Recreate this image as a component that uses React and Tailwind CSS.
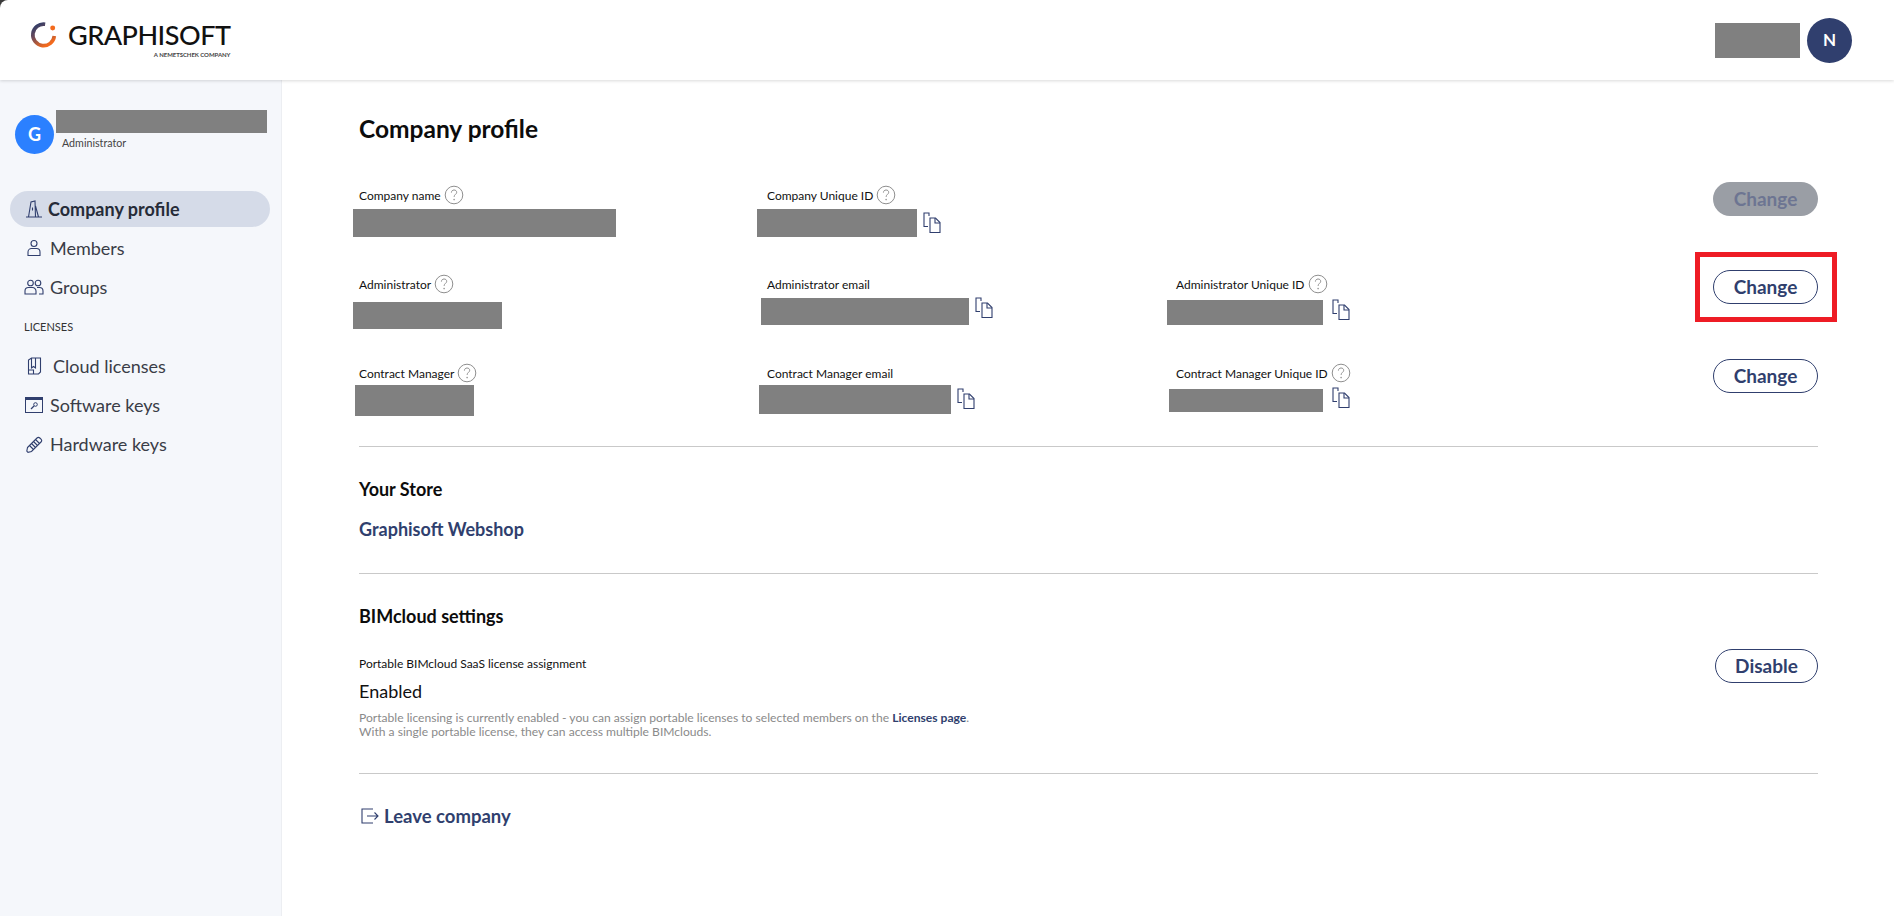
const NAVY = "#303f6e";

function HelpIcon() {
  return (
    <svg className="-mt-[3px] ml-[3px] h-[20px] w-[20px] shrink-0" viewBox="0 0 20 20" fill="none">
      <circle cx="10" cy="10" r="8.8" stroke="#8f8f8f" strokeWidth="1" />
      <path d="M7.4 7.6c0-1.6 1.2-2.6 2.7-2.6s2.6 1 2.6 2.3c0 2-2.6 2.2-2.6 4.6" stroke="#8f8f8f" strokeWidth="1" />
      <circle cx="10.1" cy="14.6" r=".8" fill="#8f8f8f" />
    </svg>
  );
}

function CopyIcon({ className = "" }) {
  return (
    <svg className={`h-[22px] w-[20px] shrink-0 ${className}`} viewBox="0 0 20 22" fill="none" stroke={NAVY} strokeWidth="1.1">
      <path d="M6 14.5H2V1h5v3" />
      <path d="M8 6h5.5L18 10.5V20.5H8z" />
      <path d="M13 6v5h5" />
    </svg>
  );
}

function Redacted({ className }) {
  return <div className={`bg-[#808080] ${className}`} />;
}

function Field({ label, help, redact, copy, copyClass }) {
  return (
    <div>
      <div className="flex h-[22px] items-center text-[12px] text-[#111]">
        {label}
        {help && <HelpIcon />}
      </div>
      <div className="flex items-start">
        <Redacted className={redact} />
        {copy && <CopyIcon className={copyClass} />}
      </div>
    </div>
  );
}

function ChangeButton({ disabled, children = "Change" }) {
  return (
    <button
      className={`h-[34px] w-[105px] rounded-full text-[19px] font-bold ${
        disabled
          ? "bg-[#9a9ea5] text-[#6d7592]"
          : "border border-[#303f6e] bg-white text-[#303f6e]"
      }`}
    >
      {children}
    </button>
  );
}

function SideItem({ icon, label, active, textClass = "" }) {
  return (
    <div
      className={`flex h-[36px] items-center rounded-full pl-[14px] text-[18px] ${
        active ? "bg-[#d5dbe8] font-bold text-[#262b38]" : "text-[#3a3d47]"
      }`}
    >
      <span className="flex w-[20px] shrink-0 justify-center">{icon}</span>
      <span className={textClass}>{label}</span>
    </div>
  );
}

const stroke = { fill: "none", stroke: NAVY, strokeWidth: 1.1 };

const BuildingIcon = (
  <svg width="18" height="18" viewBox="0 0 18 18" {...stroke}>
    <path d="M1 17h16M3.5 17 6 2l4-1 .5 16M10.5 6l3 11M7.5 7.5v3" />
  </svg>
);
const MemberIcon = (
  <svg width="16" height="18" viewBox="0 0 16 18" {...stroke}>
    <circle cx="8" cy="4.5" r="3" />
    <path d="M2 16.5V13a3.5 3.5 0 0 1 3.5-3.5h5A3.5 3.5 0 0 1 14 13v3.5z" />
  </svg>
);
const GroupIcon = (
  <svg width="20" height="16" viewBox="0 0 20 16" {...stroke} className="-ml-[1px]">
    <circle cx="6.5" cy="4" r="2.8" />
    <circle cx="14" cy="4" r="2.8" />
    <path d="M1 15v-3a3.5 3.5 0 0 1 3.5-3.5h4A3.5 3.5 0 0 1 12 12v3zM13 8.5h2.5A3.5 3.5 0 0 1 19 12v3h-4" />
  </svg>
);
const CloudIcon = (
  <svg width="15" height="18" viewBox="0 0 15 18" {...stroke}>
    <path d="M4.5 1h9v14l-2 2H1.500V3l3-2zM4.500 1v10l2-1.500 2 1.500V1" />
    <path d="M1.500 13h5v4" />
  </svg>
);
const SoftwareIcon = (
  <svg width="18" height="16" viewBox="0 0 18 16" fill="none">
    <rect x=".5" y=".5" width="17" height="15" stroke={NAVY} />
    <rect x=".5" y=".5" width="17" height="2.5" fill={NAVY} />
    <circle cx="10.5" cy="7.5" r="1.8" stroke={NAVY} />
    <path d="M9 9 6 12" stroke={NAVY} strokeWidth="1.2" />
  </svg>
);
const HardwareIcon = (
  <svg width="17" height="17" viewBox="0 0 17 17" {...stroke}>
    <path d="M1.500 11.500 11 2a2 2 0 0 1 2.800 0l1.200 1.200a2 2 0 0 1 0 2.800l-9.500 9.500-3.500.8-1.200-1.200z" />
    <path d="m3.500 9.500 4 4M5.500 7.500l4 4M7.500 5.500l4 4M9.500 3.500l4 4" />
  </svg>
);

function LogoMark() {
  return (
    <svg width="28" height="28" viewBox="0 0 26 26" fill="none" className="-mt-[1px]">
      <defs>
        <linearGradient id="ring" x1="0" y1="0" x2="0.6" y2="1">
          <stop offset="0" stopColor="#243a6b" />
          <stop offset="0.45" stopColor="#6b4a5a" />
          <stop offset="1" stopColor="#f36a1d" />
        </linearGradient>
      </defs>
      <path d="M15 3a10 10 0 1 0 8.500 11" stroke="url(#ring)" strokeWidth="3.4" />
      <circle cx="22" cy="6.500" r="2.300" fill="#f36a1d" />
    </svg>
  );
}

export default function App() {
  return (
    <div className="min-h-[916px] bg-[#3a3a3a] font-['Lato',sans-serif]">
      <div className="flex h-[916px] flex-col overflow-hidden rounded-tl-[8px] bg-white">
        {/* Header */}
        <header className="z-10 flex h-[80px] shrink-0 items-center justify-between pl-[29px] pr-[42px] shadow-[0_1px_3px_rgba(0,0,0,0.15)]">
          <div className="flex items-start">
            <LogoMark />
            <div className="ml-[11px] flex flex-col items-end">
              <span className="text-[27px] font-medium leading-[26px] tracking-[-0.5px] text-[#111]">
                GRAPHISOFT
              </span>
              <span className="mt-[3px] text-[6px] font-bold leading-[7px] tracking-[-0.05px] text-[#444]">
                A NEMETSCHEK COMPANY
              </span>
            </div>
          </div>
          <div className="flex items-center">
            <Redacted className="mr-[7px] h-[35px] w-[85px]" />
            <div className="flex h-[45px] w-[45px] items-center justify-center rounded-full bg-[#303f6e] text-[17px] font-bold text-white">
              N
            </div>
          </div>
        </header>

        <div className="flex flex-1">
          {/* Sidebar */}
          <aside className="w-[282px] shrink-0 border-r border-[#eceef2] bg-[#f5f7fb] pl-[10px] pr-[11px] pt-[30px]">
            <div className="flex items-start pl-[5px]">
              <div className="mt-[5px] flex h-[39px] w-[39px] shrink-0 items-center justify-center rounded-full bg-[#2b80ff] text-[18px] font-bold text-white">
                G
              </div>
              <div className="ml-[2px]">
                <Redacted className="h-[23px] w-[211px]" />
                <div className="ml-[6px] mt-[3px] text-[10.7px] leading-[14px] text-[#444]">Administrator</div>
              </div>
            </div>
            <nav className="mt-[37px] flex flex-col gap-[3px]">
              <SideItem icon={BuildingIcon} label="Company profile" active textClass="ml-[4px]" />
              <SideItem icon={MemberIcon} label="Members" textClass="ml-[6px]" />
              <SideItem icon={GroupIcon} label="Groups" textClass="ml-[6px]" />
              <div className="mt-[1px] flex h-[36px] items-center pl-[14px] text-[11px] text-[#333]">LICENSES</div>
              <SideItem icon={CloudIcon} label="Cloud licenses" textClass="ml-[9px]" />
              <SideItem icon={SoftwareIcon} label="Software keys" textClass="ml-[6px]" />
              <SideItem icon={HardwareIcon} label="Hardware keys" textClass="ml-[6px]" />
            </nav>
          </aside>

          {/* Main */}
          <main className="flex-1 pl-[77px] pr-[76px] pt-[35px]">
            <h1 className="text-[24.5px] font-bold leading-[28px] text-[#0c0c0c]">Company profile</h1>

            <div className="mt-[42px]">
              <div className="grid h-[89px] grid-cols-[408px_409px_1fr_auto]">
                <Field label="Company name" help redact="-ml-[6px] mt-[2px] h-[28px] w-[263px]" />
                <Field
                  label="Company Unique ID"
                  help
                  redact="-ml-[10px] mt-[2px] h-[28px] w-[160px]"
                  copy
                  copyClass="ml-[5px] mt-[5px]"
                />
                <div />
                <div className="-mt-[3px]">
                  <ChangeButton disabled />
                </div>
              </div>
              <div className="grid h-[89px] grid-cols-[408px_409px_1fr_auto]">
                <Field label="Administrator" help redact="-ml-[6px] mt-[6px] h-[27px] w-[149px]" />
                <Field
                  label="Administrator email"
                  redact="-ml-[6px] mt-[2px] h-[27px] w-[208px]"
                  copy
                  copyClass="ml-[5px] mt-[1px]"
                />
                <Field
                  label="Administrator Unique ID"
                  help
                  redact="-ml-[9px] mt-[4px] h-[25px] w-[156px]"
                  copy
                  copyClass="ml-[8px] mt-[3px]"
                />
                <div className="-mr-[19px] -mt-[22px] h-[70px] w-[142px] self-start border-[5px] border-[#ee1c25] pl-[13px] pt-[13px]">
                  <ChangeButton />
                </div>
              </div>
              <div className="grid h-[83px] grid-cols-[408px_409px_1fr_auto]">
                <Field label="Contract Manager" help redact="-ml-[4px] h-[31px] w-[119px]" />
                <Field
                  label="Contract Manager email"
                  redact="-ml-[8px] h-[29px] w-[192px]"
                  copy
                  copyClass="ml-[5px] mt-[3px]"
                />
                <Field
                  label="Contract Manager Unique ID"
                  help
                  redact="-ml-[7px] mt-[4px] h-[23px] w-[154px]"
                  copy
                  copyClass="ml-[8px] mt-[2px]"
                />
                <div className="-mt-[4px]">
                  <ChangeButton />
                </div>
              </div>
            </div>

            <hr className="border-[#c9c9c9]" />

            <h2 className="mt-[32px] text-[18px] font-bold leading-[20px] text-[#0c0c0c]">Your Store</h2>
            <div className="mt-[20px] text-[18px] font-bold leading-[20px] text-[#303f6e]">Graphisoft Webshop</div>

            <hr className="mt-[34px] border-[#c9c9c9]" />

            <h2 className="mt-[32px] text-[18px] font-bold leading-[20px] text-[#0c0c0c]">BIMcloud settings</h2>
            <div className="mt-[12px] flex items-start justify-between">
              <div>
                <div className="mt-[19px] text-[12px] leading-[14px] text-[#111]">Portable BIMcloud SaaS license assignment</div>
                <div className="mt-[9px] text-[18px] leading-[22px] text-[#111]">Enabled</div>
                <p className="mt-[9px] text-[12.1px] leading-[14px] text-[#8a8a8a]">
                  Portable licensing is currently enabled - you can assign portable licenses to selected members on the{" "}
                  <span className="font-bold text-[#303f6e]">Licenses page</span>.
                  <br />
                  With a single portable license, they can access multiple BIMclouds.
                </p>
              </div>
              <button className="mt-[11px] h-[34px] w-[103px] rounded-full border border-[#303f6e] bg-white text-[19px] font-bold text-[#303f6e]">
                Disable
              </button>
            </div>

            <hr className="mt-[34px] border-[#c9c9c9]" />

            <div className="mt-[31px] flex items-center pl-[2px] text-[18.5px] font-bold leading-[22px] text-[#303f6e]">
              <svg width="18" height="16" viewBox="0 0 18 16" fill="none" stroke={NAVY} strokeWidth="1.1">
                <path d="M12 1H1v14h11" />
                <path d="M6 8h11M13.500 4.500 17 8l-3.500 3.500" />
              </svg>
              <span className="ml-[5px]">Leave company</span>
            </div>
          </main>
        </div>
      </div>
    </div>
  );
}
